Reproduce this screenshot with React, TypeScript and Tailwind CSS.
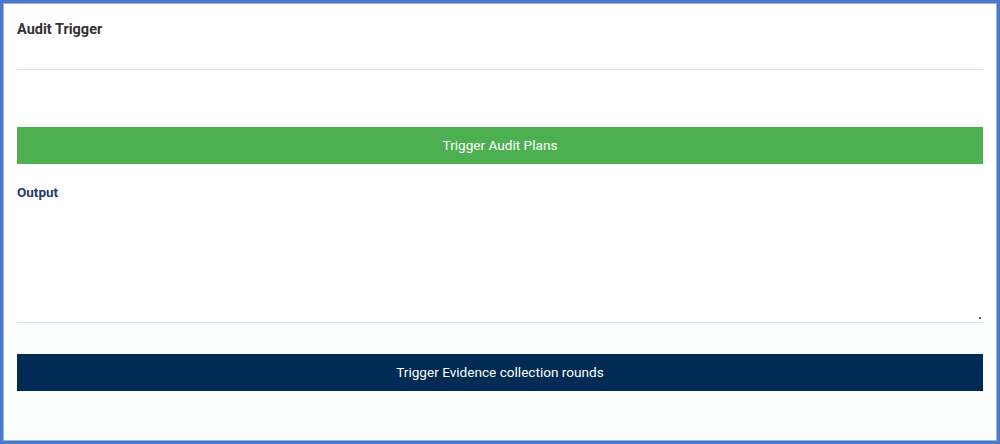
import React from "react";

export default function App() {
  return (
    <div
      className="w-[1000px] h-[444px] border-[3px] border-[#4a78cc] bg-white box-border overflow-hidden"
      style={{ fontFamily: "Roboto, 'Noto Sans', sans-serif" }}
    >
      <div className="h-full border border-[#9ab4e6] flex flex-col">
        <div className="bg-white px-[13px]">
          <div className="border-b border-[#e5e5e5] pt-[16px] pb-[29px]">
            <h1 className="text-[14.5px] leading-[20px] font-bold text-[#333]">Audit Trigger</h1>
          </div>
          <div className="h-[57px]" />
          <button className="w-full h-[37px] bg-[#4caf50] text-white text-[13.6px] flex items-center justify-center">
            Trigger Audit Plans
          </button>
          <div className="pt-[19px] text-[13.5px] leading-[18px] font-bold text-[#1e3e6e]">Output</div>
          <div className="relative h-[122px] border-b border-[#e3e3e3]">
            <span className="absolute right-[2px] bottom-[3px] w-[2px] h-[2px] bg-[#666]" />
          </div>
        </div>
        <div className="flex-1 bg-[#fcfdfd] px-[13px] pt-[31px]">
          <button className="w-full h-[37px] bg-[#002b54] text-white text-[13.6px] flex items-center justify-center">
            Trigger Evidence collection rounds
          </button>
        </div>
      </div>
    </div>
  );
}
